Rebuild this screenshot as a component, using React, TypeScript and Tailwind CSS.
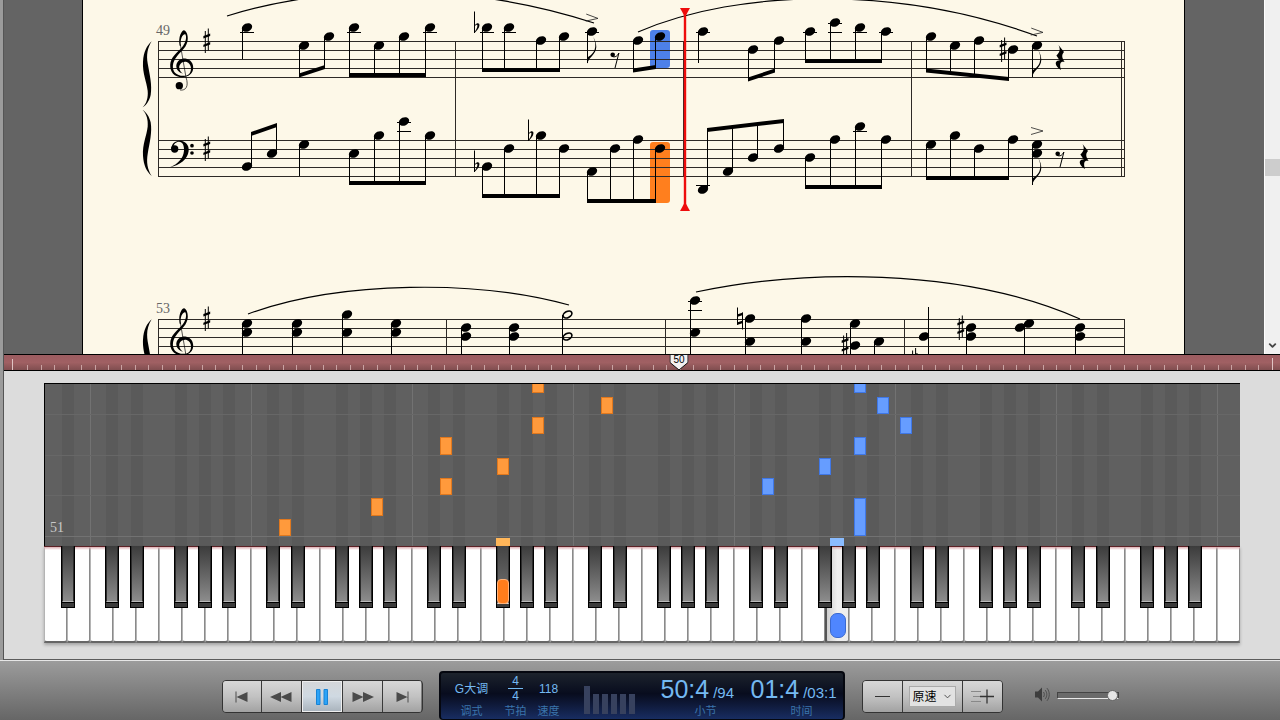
import { ChevronDown } from "lucide-react";

type Head = [x: number, y: number, ledgers?: number[]];

const STAFF_LEFT = 158;
const STAFF_RIGHT = 1125;

function NoteHead({ x, y, hollow = false }: { x: number; y: number; hollow?: boolean }) {
  return hollow ? (
    <ellipse cx={x} cy={y} rx={4.7} ry={3} fill="none" stroke="#000" strokeWidth={1.7} transform={`rotate(-28 ${x} ${y})`} />
  ) : (
    <ellipse cx={x} cy={y} rx={5.4} ry={4} transform={`rotate(-25 ${x} ${y})`} />
  );
}

function Heads({ notes }: { notes: Head[] }) {
  return (
    <>
      {notes.map(([x, y, ledgers = []]) => (
        <g key={`${x}-${y}`}>
          <NoteHead x={x} y={y} />
          {ledgers.map((l) => (
            <rect key={l} x={x - 7} y={l} width={14} height={1} />
          ))}
        </g>
      ))}
    </>
  );
}

function Stem({ x, from, to }: { x: number; from: number; to: number }) {
  return <rect x={x - 0.5} y={Math.min(from, to)} width={1} height={Math.abs(to - from)} />;
}

/* A beamed group: stems leave each head and end on the beam. */
function Beamed({ notes, y1, y2, up = false }: { notes: Head[]; y1: number; y2: number; up?: boolean }) {
  const dx = up ? 4.5 : -4.5;
  const xs = notes.map((n) => Math.floor(n[0] + dx) + 0.5);
  const first = xs[0];
  const last = xs[xs.length - 1];
  return (
    <g>
      <Heads notes={notes} />
      {notes.map((n, i) => (
        <Stem key={i} x={xs[i]} from={n[1]} to={y1 + ((y2 - y1) * (xs[i] - first)) / (last - first) + 2} />
      ))}
      <polygon points={`${first - 0.5},${y1} ${last + 0.5},${y2} ${last + 0.5},${y2 + 4} ${first - 0.5},${y1 + 4}`} />
    </g>
  );
}

function Sharp({ x, y }: { x: number; y: number }) {
  return (
    <g transform={`translate(${x} ${y})`}>
      <rect x={-1.9} y={-9.5} width={1} height={22} />
      <rect x={1.1} y={-12} width={1} height={22} />
      <polygon points="-3.3,-4.4 3.5,-7 3.5,-4.6 -3.3,-2" />
      <polygon points="-3.3,4.2 3.5,1.6 3.5,4 -3.3,6.6" />
    </g>
  );
}

function Flat({ x, y }: { x: number; y: number }) {
  return (
    <g transform={`translate(${x} ${y})`}>
      <rect x={0} y={-16} width={1} height={21.5} />
      <path d="M1 -2.5 C3 -5 5.8 -4.6 5.4 -1.8 C5 1 2.8 3.2 0.5 5.6 L0.5 4.4 C2 2.6 3.2 0.6 3.4 -1.4 C3.5 -3.2 2.2 -3 1 -1.4 Z" />
    </g>
  );
}

function Natural({ x, y }: { x: number; y: number }) {
  return (
    <g transform={`translate(${x} ${y})`}>
      <rect x={-3} y={-11} width={1} height={17} />
      <rect x={2} y={-6} width={1} height={17} />
      <polygon points="-3,-4 3,-6 3,-3.4 -3,-1.4" />
      <polygon points="-3,4 3,2 3,4.6 -3,6.6" />
    </g>
  );
}

function Flag({ x, y }: { x: number; y: number }) {
  return (
    <path
      d={`M${x} ${y} C${x + 0.6} ${y - 7} ${x + 8.6} ${y - 9} ${x + 8.8} ${y - 17} C${x + 8.8} ${y - 21} ${x + 7.5} ${y - 24} ${x + 5.8} ${y - 27} C${x + 8} ${y - 22} ${x + 8.5} ${y - 18} ${x + 7} ${y - 14} C${x + 5} ${y - 9} ${x + 1} ${y - 8} ${x} ${y - 6} Z`}
    />
  );
}

function EighthRest({ x, y }: { x: number; y: number }) {
  return (
    <g transform={`translate(${x} ${y})`}>
      <circle cx={-2.3} cy={-5.3} r={2.3} />
      <path d="M-3 -3.6 C0 -2.4 2.2 -3.6 3.9 -7 L0 8" fill="none" stroke="#000" strokeWidth={1} />
    </g>
  );
}

function QuarterRest({ x, y }: { x: number; y: number }) {
  return (
    <path
      transform={`translate(${x} ${y})`}
      d="M-1.5 -13 L4 -6 C1.6 -3.4 1.6 -0.8 4.6 4 C0.8 3 -1 5 1 12 C-6 8 -5.5 2 -0.3 2.6 L-3.6 -2.6 C0 -6 0.6 -8.6 -1.5 -13 Z"
    />
  );
}

function Accent({ x, y, tilt = 0 }: { x: number; y: number; tilt?: number }) {
  return (
    <path
      d={`M${x - 6} ${y - 3.5} L${x + 6} ${y} L${x - 6} ${y + 3.5}`}
      transform={`rotate(${tilt} ${x} ${y})`}
      fill="none"
      stroke="#222"
      strokeWidth={0.8}
    />
  );
}

function TrebleClef({ y }: { y: number }) {
  return (
    <g transform={`translate(130 ${y}) scale(0.3333)`}>
      <path d="M149 137 C144 112 155 91 162 91 C171 93 176 112 172 126 C167 146 150 156 140 170 C127 186 125 206 135 218 C145 229 168 231 178 221 C187 211 184 190 170 186 C155 183 146 195 148 205 C149 212 154 218 159 221 C146 218 138 208 139 196 C141 180 156 173 169 176 C187 180 193 198 188 213 C181 231 158 235 141 229 C122 222 116 198 124 180 C131 164 148 152 159 138 C167 127 171 112 166 103 C158 101 149 118 153 137 Z" />
      <path d="M151 134 L168 232 C177 258 168 273 150 270" fill="none" stroke="#000" strokeWidth={2} />
      <circle cx={148} cy={257} r={11} />
    </g>
  );
}

function BassClef() {
  return (
    <g transform="translate(130 0) scale(0.3333)">
      <path d="M124 446 C125 428 138 422 150 422 C168 423 178 436 176 453 C173 478 150 495 120 502 C146 490 160 474 162 452 C163 436 158 426 147 425 C138 425 131 432 131 440 Z" />
      <circle cx={134} cy={447} r={11} />
      <circle cx={186} cy={437} r={5.5} />
      <circle cx={186} cy={459} r={5.5} />
    </g>
  );
}

const BRACE_HALF =
  "M65 124 C52 145 49 165 53 190 C59 225 67 255 62 285 C58 303 48 316 38 322 C50 310 55 292 53 272 C50 245 37 220 39 185 C41 155 50 138 65 124 Z";

function Staff({ y }: { y: number }) {
  return (
    <>
      {[0, 9, 18, 27, 36].map((d) => (
        <rect key={d} x={STAFF_LEFT} y={y + d} width={STAFF_RIGHT - STAFF_LEFT} height={1} fill="#2e2a26" />
      ))}
    </>
  );
}

function Chord({ x, ys, ledgers }: { x: number; ys: number[]; ledgers?: number[] }) {
  return (
    <g>
      <Heads notes={ys.map((y, i): Head => [x, y, i === 0 ? ledgers : undefined])} />
      <Stem x={Math.floor(x - 4.5) + 0.5} from={ys[0]} to={390} />
    </g>
  );
}

function Slur({ d }: { d: string }) {
  return <path d={d} fill="none" stroke="#000" strokeWidth={1.2} />;
}

function Score() {
  return (
    <svg viewBox="83 0 1101 354" className="block h-[354px] w-[1101px] shrink-0" role="img" aria-label="Score">
      <rect x={650} y={30} width={20} height={38} rx={3} fill="#4d80e8" />
      <rect x={650} y={142} width={20} height={61} rx={3} fill="#ff7f1e" />

      <g fontFamily='"Liberation Serif", serif' fontSize={14} fill="#666">
        <text x={156} y={35}>49</text>
        <text x={156} y={313}>53</text>
      </g>

      <Staff y={41} />
      <Staff y={140} />
      <Staff y={319} />
      {[158, 455, 683, 911, 1121, 1124].map((x) => (
        <rect key={x} x={x} y={41} width={1} height={136} fill="#2e2a26" />
      ))}
      {[158, 446, 665, 904, 1124].map((x) => (
        <rect key={x} x={x} y={319} width={1} height={60} fill="#2e2a26" />
      ))}

      <g transform="translate(130 0) scale(0.3333)">
        <path d={BRACE_HALF} />
        <path d={BRACE_HALF} transform="translate(0 652) scale(1 -1)" />
        <path d={BRACE_HALF} transform="translate(0 834)" />
      </g>
      <TrebleClef y={0} />
      <TrebleClef y={278} />
      <BassClef />
      <Sharp x={206.7} y={40.5} />
      <Sharp x={206.7} y={148.5} />
      <Sharp x={206.7} y={318.5} />

      <Slur d="M227 16 C330 -16 470 -18 594 23" />
      <Slur d="M638 32 C740 -12 900 -14 1037 36" />
      <Slur d="M248 314 C340 280 480 280 569 305" />
      <Slur d="M696 292 C800 270 960 266 1080 319" />

      {/* bar 49 */}
      <Heads notes={[[247, 27.5, [32]]]} />
      <Stem x={242.5} from={27} to={59} />
      <Beamed notes={[[304, 45.5], [329, 36.5]]} y1={73.5} y2={65} />
      <Beamed notes={[[354, 27.5, [32]], [379, 45.5], [404, 36.5], [430, 27.5, [32]]]} y1={73} y2={73} />
      <Beamed notes={[[247, 166.5], [272, 153.5]]} y1={132} y2={123} up />
      <Heads notes={[[304, 144.5]]} />
      <Stem x={299.5} from={144} to={176} />
      <Beamed notes={[[354, 153.5], [379, 135.5], [404, 121.5, [122, 131]], [430, 135.5]]} y1={181} y2={181} />

      {/* bar 50 */}
      <Flat x={474} y={27.5} />
      <Beamed notes={[[487, 27.5, [32]], [509, 27.5, [32]], [541, 40.5], [564, 36.5]]} y1={68} y2={68} />
      <Heads notes={[[592, 31.5, [32]]]} />
      <Stem x={587.5} from={31} to={63} />
      <Flag x={587.5} y={64} />
      <Accent x={592} y={18} tilt={4} />
      <EighthRest x={615} y={60} />
      <Beamed notes={[[638, 40.5], [660, 36.5]]} y1={68.5} y2={65} />
      <Flat x={474} y={166.5} />
      <Flat x={528} y={135.5} />
      <Beamed notes={[[487, 166.5], [509, 148.5], [541, 135.5], [564, 148.5]]} y1={194} y2={194} />
      <Beamed notes={[[592, 171.5], [615, 148.5], [638, 139.5], [660, 148.5]]} y1={199} y2={199} />

      {/* bar 51 */}
      <Heads notes={[[703, 31.5, [32]]]} />
      <Stem x={698.5} from={31} to={63} />
      <Beamed notes={[[753, 49.5], [779, 40.5]]} y1={77.5} y2={68.5} />
      <Beamed notes={[[810, 31.5, [32]], [835, 22.5, [23, 32]], [860, 27.5, [32]], [886, 31.5, [32]]]} y1={59} y2={59} />
      <Beamed notes={[[703, 189.5, [185]], [728, 171.5], [753, 157.5], [779, 148.5]]} y1={128} y2={119} up />
      <Beamed notes={[[810, 157.5], [835, 139.5], [860, 126.5, [131]], [886, 139.5]]} y1={185} y2={185} />

      {/* bar 52 */}
      <Beamed notes={[[931, 36.5], [955, 45.5], [979, 40.5], [1013, 49.5]]} y1={68.5} y2={77} />
      <Sharp x={1003} y={49.5} />
      <Heads notes={[[1037, 45.5]]} />
      <Stem x={1032.5} from={45} to={77} />
      <Flag x={1032.5} y={77} />
      <Accent x={1037} y={32} tilt={4} />
      <QuarterRest x={1060} y={58} />
      <Beamed notes={[[931, 144.5], [955, 135.5], [979, 148.5], [1013, 139.5]]} y1={176} y2={176} />
      <Heads notes={[[1037, 144.5], [1037, 153.5]]} />
      <Stem x={1032.5} from={144} to={185} />
      <Flag x={1032.5} y={185} />
      <Accent x={1037} y={131} />
      <EighthRest x={1060} y={159} />
      <QuarterRest x={1084} y={157} />

      {/* second system */}
      <Chord x={247} ys={[323.5, 332.5]} />
      <Chord x={297} ys={[323.5, 332.5]} />
      <Chord x={347} ys={[314.5, 332.5]} />
      <Chord x={396} ys={[323.5, 332.5]} />
      <Chord x={466} ys={[327.5, 336.5]} />
      <Chord x={514} ys={[327.5, 336.5]} />
      <NoteHead x={567.5} y={314.5} hollow />
      <NoteHead x={567.5} y={336.5} hollow />
      <Stem x={562.5} from={315} to={390} />
      <Chord x={695} ys={[300.5, 332.5]} ledgers={[301, 310]} />
      <Natural x={740} y={318.5} />
      <Chord x={750} ys={[318.5, 341.5]} />
      <Chord x={806} ys={[318.5, 341.5]} />
      <Sharp x={845} y={345} />
      <Chord x={855} ys={[323.5, 345.5]} />
      <Chord x={879} ys={[341.5]} />
      <Heads notes={[[924, 336.5]]} />
      <Stem x={928.5} from={307} to={390} />
      <Sharp x={914} y={360} />
      <Sharp x={960.7} y={327.5} />
      <Chord x={971} ys={[327.5, 336.5]} />
      <Heads notes={[[1020, 327.5], [1029, 323.5]]} />
      <Stem x={1024.5} from={323} to={390} />
      <Chord x={1080} ys={[327.5, 336.5]} />

      {/* play position */}
      <g fill="#ee0c0c">
        <rect x={683.8} y={10} width={2.4} height={199} />
        <polygon points="680,8 690,8 685,17" />
        <polygon points="680,211 690,211 685,202" />
      </g>
    </svg>
  );
}

function SheetView() {
  return (
    <section className="flex min-h-0 flex-1 bg-[#646464]">
      <div className="flex min-w-0 flex-1 justify-center overflow-hidden pr-px">
        <div className="flex shrink-0 border-x border-black bg-[#fdf8e8]">
          <Score />
        </div>
      </div>
      <div className="flex w-4 flex-col items-center justify-end border-l border-white bg-[#f0f0f0]">
        <div className="h-[17px] w-full bg-[#cdcdcd]" />
        <button type="button" aria-label="Scroll down" className="mt-[161px] flex h-[17px] w-full items-center justify-center text-[#444]">
          <ChevronDown size={11} strokeWidth={4} />
        </button>
      </div>
    </section>
  );
}

const TICKS = [
  ...Array.from({ length: 42 }, (_, i) => 23.3 + i * 13.44),
  ...Array.from({ length: 50 }, (_, i) => 595 + i * 13.45),
];

function Ruler() {
  return (
    <div className="relative h-[17px] shrink-0 border-y border-black bg-linear-to-b from-[#9c5c60] via-[#a06063] to-[#804e50]">
      <svg viewBox="0 0 1276 15" preserveAspectRatio="none" className="block h-full w-full" aria-hidden="true">
        {TICKS.map((x) => (
          <rect key={x} x={Math.round(x)} y={10} width={1} height={5} fill="#c9a3a3" />
        ))}
        <rect x={8} y={4} width={1} height={11} fill="#e0c4c4" />
        <rect x={1268} y={3} width={1} height={12} fill="#e0c4c4" />
      </svg>
      <div className="absolute -top-px left-[52.9%] flex h-[17px] w-[19px] -translate-x-1/2 justify-center">
        <svg viewBox="0 0 19 17" className="absolute inset-0" aria-hidden="true">
          <path d="M0.5 0.5 H18.5 V8.5 L9.5 16 L0.5 8.5 Z" fill="#f2f0f0" stroke="#111" />
        </svg>
        <span className="relative text-[10px] leading-[11px] text-black">50</span>
      </div>
    </div>
  );
}

const KEYBED = 1196;
const BLACK_OFFSETS = [15, 40, 84, 108, 132];
const BLACK_KEYS = [
  17,
  ...Array.from({ length: 7 }, (_, octave) => BLACK_OFFSETS.map((o) => 46 + octave * 161 + o)).flat(),
];

type RollNote = [x: number, y: number, h: number];
const LEFT_HAND: RollNote[] = [
  [235, 135, 17],
  [327, 114, 18],
  [396, 53, 18],
  [396, 94, 17],
  [453, 74, 17],
  [488, 0, 10],
  [488, 33, 17],
  [557, 13, 17],
];
const RIGHT_HAND: RollNote[] = [
  [718, 94, 17],
  [775, 74, 17],
  [810, 0, 10],
  [810, 53, 18],
  [810, 114, 38],
  [833, 13, 17],
  [856, 33, 17],
];

function RollNotes({ notes, fill, stroke }: { notes: RollNote[]; fill: string; stroke: string }) {
  return (
    <>
      {notes.map(([x, y, h]) => (
        <rect key={`${x}-${y}`} x={x + 0.5} y={y ? y + 0.5 : -0.5} width={11} height={y ? h - 1 : h - 1} fill={fill} stroke={stroke} />
      ))}
    </>
  );
}

function PianoRoll() {
  return (
    <div className="relative h-[163px] border-t border-l border-black bg-[#606060]">
      <svg viewBox="1 0 1195 162" preserveAspectRatio="none" className="block h-full w-full" role="img" aria-label="Piano roll">
        {BLACK_KEYS.map((x) => (
          <rect key={x} x={x + 1} y={0} width={12} height={162} fill="#5a5a5a" />
        ))}
        {Array.from({ length: 8 }, (_, i) => (
          <rect key={i} x={46 + i * 161} y={0} width={1} height={162} fill="#727272" />
        ))}
        {[30, 71, 111, 152].map((y) => (
          <rect key={y} x={0} y={y} width={KEYBED} height={1} fill={y === 152 ? "#727272" : "#676767"} />
        ))}
        <RollNotes notes={LEFT_HAND} fill="#ff9a3c" stroke="#e0781e" />
        <RollNotes notes={RIGHT_HAND} fill="#669dff" stroke="#3f77e6" />
        <rect x={452} y={154} width={14} height={8} fill="#ffb659" />
        <rect x={786} y={154} width={14} height={8} fill="#8abcff" />
      </svg>
      <span className="absolute bottom-[10px] left-[5px] font-['Liberation_Serif',serif] text-[14px] leading-[16px] text-[#c8c8c8]">51</span>
    </div>
  );
}

function Keyboard() {
  return (
    <div className="relative h-[97px] shadow-[0_2px_3px_rgba(0,0,0,0.25)]">
      <div className="flex h-full bg-[#777]">
        {Array.from({ length: 52 }, (_, i) => (
          <button
            key={i}
            type="button"
            aria-label={`White key ${i + 1}`}
            className={
              i === 34
                ? "flex flex-1 items-end justify-center rounded-b-[3px] border-r border-b-2 border-l-2 border-r-[#888] border-b-[#666] border-l-[#555] bg-linear-to-r from-[#cfcfcf] via-[#f0f0f0] to-[#ededed] pb-[3px]"
                : "flex-1 rounded-b-[3px] border-r border-b-2 border-l border-r-[#8a8a8a] border-b-[#666] border-l-[#b4b4b4] bg-white"
            }
          >
            {i === 34 && <span className="block h-[25px] w-4 rounded-[7px] border border-[#3a69d0] bg-[#4f86ff]" />}
          </button>
        ))}
      </div>
      <div className="pointer-events-none absolute inset-x-0 top-0 h-1 border-t border-[#5c2226] bg-linear-to-b from-[#dcaeb2] to-transparent" />
      {BLACK_KEYS.map((x, i) => (
        <button
          key={x}
          type="button"
          aria-label={`Black key ${i + 1}`}
          style={{ left: `${(x / KEYBED) * 100}%` }}
          className="absolute top-0 flex h-[62px] w-[14px] flex-col border-x border-b border-black bg-[#3c3c3c]"
        >
          <span
            className={
              x === 452
                ? "h-[58px] w-full border-x border-b-2 border-x-[#333] border-b-[#ddd] bg-linear-to-b from-[#444] to-[#777]"
                : "h-[56px] w-full border-x border-b border-x-[#2b2b2b] border-b-[#bbb] bg-linear-to-b from-[#3c3c3c] to-[#8c8c8c]"
            }
          />
          {x !== 452 && <span className="h-px w-full bg-black" />}
          {x === 452 && <span className="absolute top-[33px] left-0 h-[25px] w-3 rounded-[4px] border border-[#ffb27a] bg-[#ff7d1c]" />}
        </button>
      ))}
    </div>
  );
}

const GLOSS = "bg-linear-to-b from-[#d8d8d8] from-0% via-[#c2c2c2] via-50% to-[#a2a2a2] to-100%";
const DIVIDER = "border-r border-[#3a3a3a]";

function Transport() {
  return (
    <div className="flex h-[33px] w-[201px] overflow-hidden rounded-[4px] border border-[#333]">
      <button type="button" aria-label="Go to start" className={`flex flex-1 items-center justify-center ${GLOSS} ${DIVIDER}`}>
        <svg width="13" height="12" viewBox="0 0 13 12" fill="#4a4a4a" aria-hidden="true">
          <path d="M0.5 0.5 H1.5 V11.5 H0.5 Z M12.5 1 V11 L1.5 6 Z" />
        </svg>
      </button>
      <button type="button" aria-label="Rewind" className={`flex flex-1 items-center justify-center ${GLOSS} ${DIVIDER}`}>
        <svg width="22" height="12" viewBox="0 0 22 12" fill="#4a4a4a" aria-hidden="true">
          <path d="M11 1 V11 L0 6 Z M21.5 1 V11 L10.5 6 Z" />
        </svg>
      </button>
      <button type="button" aria-label="Pause" className="flex flex-1 items-center justify-center border border-[#eee] bg-linear-to-b from-[#d4d7da] via-[#cfd9e2] to-[#aab4bd]">
        <svg width="12" height="16" viewBox="0 0 12 16" fill="#2ba3f7" stroke="#1683d6" aria-hidden="true">
          <path d="M0.5 0.5 H4 V15.5 H0.5 Z M8 0.5 H11.5 V15.5 H8 Z" />
        </svg>
      </button>
      <button type="button" aria-label="Fast forward" className={`flex flex-1 items-center justify-center border-l ${GLOSS} ${DIVIDER}`}>
        <svg width="22" height="12" viewBox="0 0 22 12" fill="#4a4a4a" aria-hidden="true">
          <path d="M0.5 1 V11 L11.5 6 Z M11 1 V11 L22 6 Z" />
        </svg>
      </button>
      <button type="button" aria-label="Go to end" className={`flex flex-1 items-center justify-center ${GLOSS}`}>
        <svg width="13" height="12" viewBox="0 0 13 12" fill="#4a4a4a" aria-hidden="true">
          <path d="M0.5 1 V11 L11.5 6 Z M11.5 0.5 H12.5 V11.5 H11.5 Z" />
        </svg>
      </button>
    </div>
  );
}

const LCD_LABEL = "text-[11px] leading-[14px] text-[#3a74ab]";

function Display() {
  return (
    <div className="flex h-[49px] w-[406px] rounded-[4px] border-2 border-b border-[#05070f] bg-linear-to-b from-[#1d232c] from-0% via-[#080c1e] via-45% to-[#182d62] to-100% pl-[6px] text-[#74b9f2]">
      <div className="flex w-[50px] flex-col items-center">
        <span className="flex h-[31px] items-center text-[12px]">G大调</span>
        <span className={LCD_LABEL}>调式</span>
      </div>
      <div className="flex w-[38px] flex-col items-center">
        <span className="flex h-[31px] flex-col items-center justify-center text-[12px] leading-[14px]">
          <span className="w-[15px] border-b border-[#74b9f2] text-center">4</span>
          <span>4</span>
        </span>
        <span className={LCD_LABEL}>节拍</span>
      </div>
      <div className="flex w-[28px] flex-col items-center">
        <span className="flex h-[31px] items-center text-[12px]">118</span>
        <span className={LCD_LABEL}>速度</span>
      </div>
      <div className="flex w-[98px] items-end justify-center gap-[3px] pr-1 pb-[5px]">
        <span className="h-[28px] w-[6px] bg-[#37415e]" />
        {[1, 2, 3, 4, 5].map((n) => (
          <span key={n} className="h-5 w-[6px] bg-[#37415e]" />
        ))}
      </div>
      <div className="flex w-[90px] flex-col">
        <span className="flex h-[31px] items-baseline gap-1 whitespace-nowrap text-[25px] leading-[33px]">
          50:4 <span className="text-[15px]">/94</span>
        </span>
        <span className={`text-center ${LCD_LABEL}`}>小节</span>
      </div>
      <div className="flex w-[90px] flex-col">
        <span className="flex h-[31px] items-baseline gap-1 whitespace-nowrap text-[25px] leading-[33px]">
          01:4 <span className="text-[15px]">/03:1</span>
        </span>
        <span className={`pl-3 text-center ${LCD_LABEL}`}>时间</span>
      </div>
    </div>
  );
}

function SpeedControl() {
  return (
    <div className="flex h-[33px] w-[141px] overflow-hidden rounded-[4px] border border-[#333]">
      <button type="button" aria-label="Slower" className={`flex w-10 items-center justify-center ${GLOSS} ${DIVIDER}`}>
        <span className="h-px w-[15px] bg-[#333]" />
      </button>
      <div className={`flex w-[60px] items-center justify-center ${GLOSS} ${DIVIDER}`}>
        <div className="relative flex h-[21px] w-[47px]">
          <select
            aria-label="Speed"
            defaultValue="原速"
            className="block h-[21px] w-full appearance-none border border-[#aaa] bg-[#e2e2e2] pl-[3px] text-[12px] leading-[18px] text-black"
          >
            <option>原速</option>
          </select>
          <ChevronDown size={11} strokeWidth={2} className="pointer-events-none absolute top-[5px] right-[3px] text-[#444]" />
        </div>
      </div>
      <button type="button" aria-label="Faster" className={`flex flex-1 items-center justify-center ${GLOSS}`}>
        <svg width="26" height="15" viewBox="0 0 26 15" aria-hidden="true">
          <path d="M11 7.5 H25 M18 0.5 V14.5" stroke="#333" strokeWidth="1.3" />
          <path d="M2 2.5 H12 M4 7.5 H11 M2 12.5 H12" stroke="#888" />
        </svg>
      </button>
    </div>
  );
}

function Volume() {
  return (
    <div className="flex h-[33px] items-center gap-[6px]">
      <svg width="17" height="17" viewBox="0 0 17 17" aria-hidden="true">
        <path d="M1 5.5 H4 L8 1.5 V15.5 L4 11.5 H1 Z" fill="#3d3d3d" />
        <path d="M9.5 6 C10.6 7.5 10.6 9.5 9.5 11 M11.3 4.2 C13.3 6.8 13.3 10.2 11.3 12.8 M13 2.2 C16 6 16 11 13 14.8" fill="none" stroke="#4a4a4a" strokeWidth="1" />
      </svg>
      <input
        type="range"
        aria-label="Volume"
        min={0}
        max={100}
        defaultValue={100}
        className="mt-[2px] h-[7px] w-[62px] appearance-none border border-[#444] border-b-[#e8e8e8] bg-[#6a6a6a] [&::-webkit-slider-thumb]:size-[11px] [&::-webkit-slider-thumb]:appearance-none [&::-webkit-slider-thumb]:rounded-full [&::-webkit-slider-thumb]:border [&::-webkit-slider-thumb]:border-[#666] [&::-webkit-slider-thumb]:bg-[#e6e6e6]"
      />
    </div>
  );
}

export default function App() {
  return (
    <div className="flex h-screen flex-col overflow-hidden bg-[#dcdcdc] font-['Liberation_Sans','Noto_Sans_CJK_SC',sans-serif]">
      <div className="flex min-h-0 flex-1">
        <div className="w-1 shrink-0 border-r border-[#555] bg-[#9b9b9b]" />
        <main className="flex min-w-0 flex-1 flex-col">
          <SheetView />
          <Ruler />
          <section className="border-b border-[#5c5c5c] px-10 pt-3 pb-4">
            <PianoRoll />
            <Keyboard />
          </section>
        </main>
      </div>
      <footer className="flex h-[60px] shrink-0 items-start justify-center border-t border-[#e6e6e6] bg-linear-to-b from-[#9c9c9c] to-[#666] pt-[10px] pl-15">
        <div className="mt-[9px]">
          <Transport />
        </div>
        <div className="ml-4">
          <Display />
        </div>
        <div className="mt-[9px] ml-[17px]">
          <SpeedControl />
        </div>
        <div className="mt-[7px] ml-[31px]">
          <Volume />
        </div>
      </footer>
    </div>
  );
}
